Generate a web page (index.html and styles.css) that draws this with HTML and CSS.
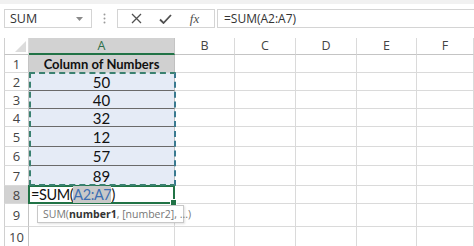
FILE: index.html
```html
<!DOCTYPE html>
<html lang="en">
<head>
<meta charset="UTF-8">
<title>SUM formula</title>
<link rel="stylesheet" href="styles.css">
</head>
<body>

<div class="ribbon-edge"></div>

<div class="formula-bar">
    <div class="name-box">
        <span>SUM</span>
        <svg class="drop" width="7" height="4" viewBox="0 0 7 4"><path d="M0 0H7L3.5 4Z" fill="#8a8a8a"/></svg>
    </div>
    <div class="grip">
        <svg width="3" height="11" viewBox="0 0 3 11"><circle cx="1.5" cy="1.5" r="1" fill="#9a9a9a"/><circle cx="1.5" cy="5.5" r="1" fill="#9a9a9a"/><circle cx="1.5" cy="9.5" r="1" fill="#9a9a9a"/></svg>
    </div>
    <div class="fx-buttons">
        <svg width="11" height="11" viewBox="0 0 11 11"><path d="M1 1L10 10M10 1L1 10" stroke="#505050" stroke-width="1.3"/></svg>
        <svg width="13" height="10" viewBox="0 0 13 10"><path d="M1 5.5L4.5 9L12 1" stroke="#505050" stroke-width="1.8" fill="none"/></svg>
        <span class="fx">fx</span>
    </div>
    <div class="formula-input">=SUM(A2:A7)</div>
</div>

<div class="sheet">
    <div class="corner">
        <svg width="11" height="11" viewBox="0 0 11 11"><path d="M11 0V11H0Z" fill="#dcdcdc"/></svg>
    </div>
    <div class="col-head active">A</div>
    <div class="col-head">B</div>
    <div class="col-head">C</div>
    <div class="col-head">D</div>
    <div class="col-head">E</div>
    <div class="col-head">F</div>

    <div class="row-head">1</div>
    <div class="cell title">Column of Numbers</div>
    <div class="cell"></div><div class="cell"></div><div class="cell"></div><div class="cell"></div><div class="cell"></div>

    <div class="row-head">2</div>
    <div class="cell num">50</div>
    <div class="cell"></div><div class="cell"></div><div class="cell"></div><div class="cell"></div><div class="cell"></div>

    <div class="row-head">3</div>
    <div class="cell num">40</div>
    <div class="cell"></div><div class="cell"></div><div class="cell"></div><div class="cell"></div><div class="cell"></div>

    <div class="row-head">4</div>
    <div class="cell num">32</div>
    <div class="cell"></div><div class="cell"></div><div class="cell"></div><div class="cell"></div><div class="cell"></div>

    <div class="row-head">5</div>
    <div class="cell num">12</div>
    <div class="cell"></div><div class="cell"></div><div class="cell"></div><div class="cell"></div><div class="cell"></div>

    <div class="row-head">6</div>
    <div class="cell num">57</div>
    <div class="cell"></div><div class="cell"></div><div class="cell"></div><div class="cell"></div><div class="cell"></div>

    <div class="row-head">7</div>
    <div class="cell num">89</div>
    <div class="cell"></div><div class="cell"></div><div class="cell"></div><div class="cell"></div><div class="cell"></div>

    <div class="row-head selected">8</div>
    <div class="cell editing">=SUM(<span class="ref">A2:A7</span>)<span class="handle"></span></div>
    <div class="cell"></div><div class="cell"></div><div class="cell"></div><div class="cell"></div><div class="cell"></div>

    <div class="row-head">9</div>
    <div class="cell"></div>
    <div class="cell"></div><div class="cell"></div><div class="cell"></div><div class="cell"></div><div class="cell"></div>

    <div class="row-head">10</div>
    <div class="cell"></div>
    <div class="cell"></div><div class="cell"></div><div class="cell"></div><div class="cell"></div><div class="cell"></div>

    <!-- marching ants around the referenced range -->
    <div class="copy-range"></div>

    <div class="tooltip">SUM(<b>number1</b>, [number2], ...)</div>
</div>

</body>
</html>
```

FILE: styles.css
```css
body {
    margin: 0;
    background-color: #fff;
    font-family: "Open Sans", Arial, sans-serif;
    color: #222;
    overflow: hidden;
}

.ribbon-edge {
    height: 4px;
    background-color: #f1f1f1;
}

.formula-bar {
    display: flex;
    height: 19px;
    margin-top: 5px;
    padding-left: 4px;
}

.name-box {
    display: flex;
    align-items: center;
    justify-content: space-between;
    width: 88px;
    padding: 0 8px 0 5px;
    border: 1px solid #d4d4d4;
    box-sizing: border-box;
    font-size: 12.5px;
    color: #333;
}

.grip {
    display: flex;
    align-items: center;
    justify-content: center;
    width: 25px;
}

.fx-buttons {
    display: flex;
    align-items: center;
    justify-content: space-around;
    width: 98px;
    padding: 0 6px 0 4px;
    border: 1px solid #d4d4d4;
    box-sizing: border-box;
}

.fx {
    font-family: "Liberation Serif", serif;
    font-style: italic;
    font-size: 13px;
    color: #505050;
}

.formula-input {
    flex: 1;
    margin-left: 2px;
    padding-left: 6px;
    border: 1px solid #d4d4d4;
    border-right: none;
    font-size: 12px;
    line-height: 17px;
    color: #333;
}

.sheet {
    position: relative;
    display: grid;
    grid-template-columns: 25px 146px 60px 61px 61px 60px 1fr;
    grid-template-rows: 17px 18px 18px 18px 18px 20px 19px 20px 18px 23px 20px;
    margin: 10px 0 0 4px;
}

.corner, .col-head, .row-head, .cell {
    box-sizing: border-box;
    border-right: 1px solid #dadada;
    border-bottom: 1px solid #dadada;
}

.corner {
    display: flex;
    align-items: flex-end;
    justify-content: flex-end;
    padding: 0 2px 2px 0;
    border-left: 1px solid #d0d0d0;
    border-bottom-color: #c4c4c4;
}

.col-head {
    text-align: center;
    font-size: 12.5px;
    line-height: 16px;
    color: #444;
    border-bottom-color: #c4c4c4;
}

.col-head.active {
    background-color: #d2d2d2;
    color: #2b6e48;
    border-bottom: 2px solid #217346;
    border-right-color: #c4c4c4;
}

.row-head {
    display: flex;
    align-items: center;
    justify-content: center;
    font-size: 13px;
    color: #444;
    border-left: 1px solid #d0d0d0;
    border-right-color: #c4c4c4;
}

.row-head.selected {
    background-color: #d2d2d2;
}

.cell {
    display: flex;
    align-items: center;
    font-family: Lato, "Open Sans", sans-serif;
    font-size: 14px;
    color: #111;
}

.title {
    justify-content: center;
    background-color: #d0d0d0;
    font-weight: bold;
    font-size: 13px;
    border-right-color: #c0c0c0;
}

.num {
    justify-content: center;
    background-color: #e5ebf6;
    font-size: 15px;
    border-bottom-color: #6a6a6a;
    border-right-color: #c0c0c0;
}

.editing {
    position: relative;
    margin: -1px 0 0 -1px;
    padding-left: 1px;
    border: 2px solid #217346;
    font-size: 14.5px;
    letter-spacing: -0.4px;
}

.ref {
    color: #3d6fb3;
    background-color: #c9c9c9;
}

.handle {
    position: absolute;
    right: -4px;
    bottom: -4px;
    width: 5px;
    height: 5px;
    background-color: #217346;
    border: 1px solid #fff;
}

.copy-range {
    position: absolute;
    left: 25px;
    top: 34px;
    width: 147px;
    height: 114px;
    box-sizing: border-box;
    border: 2px dashed #3a8170;
    border-right-color: #3a7a90;
}

.tooltip {
    position: absolute;
    left: 33px;
    top: 167px;
    width: 147px;
    height: 18px;
    box-sizing: border-box;
    padding-left: 5px;
    background-color: #fff;
    border: 1px solid #c8c8c8;
    box-shadow: 1px 1px 2px rgba(0, 0, 0, 0.12);
    font-size: 10.5px;
    line-height: 16px;
    color: #777;
    white-space: nowrap;
}

.tooltip b {
    color: #333;
}
```
